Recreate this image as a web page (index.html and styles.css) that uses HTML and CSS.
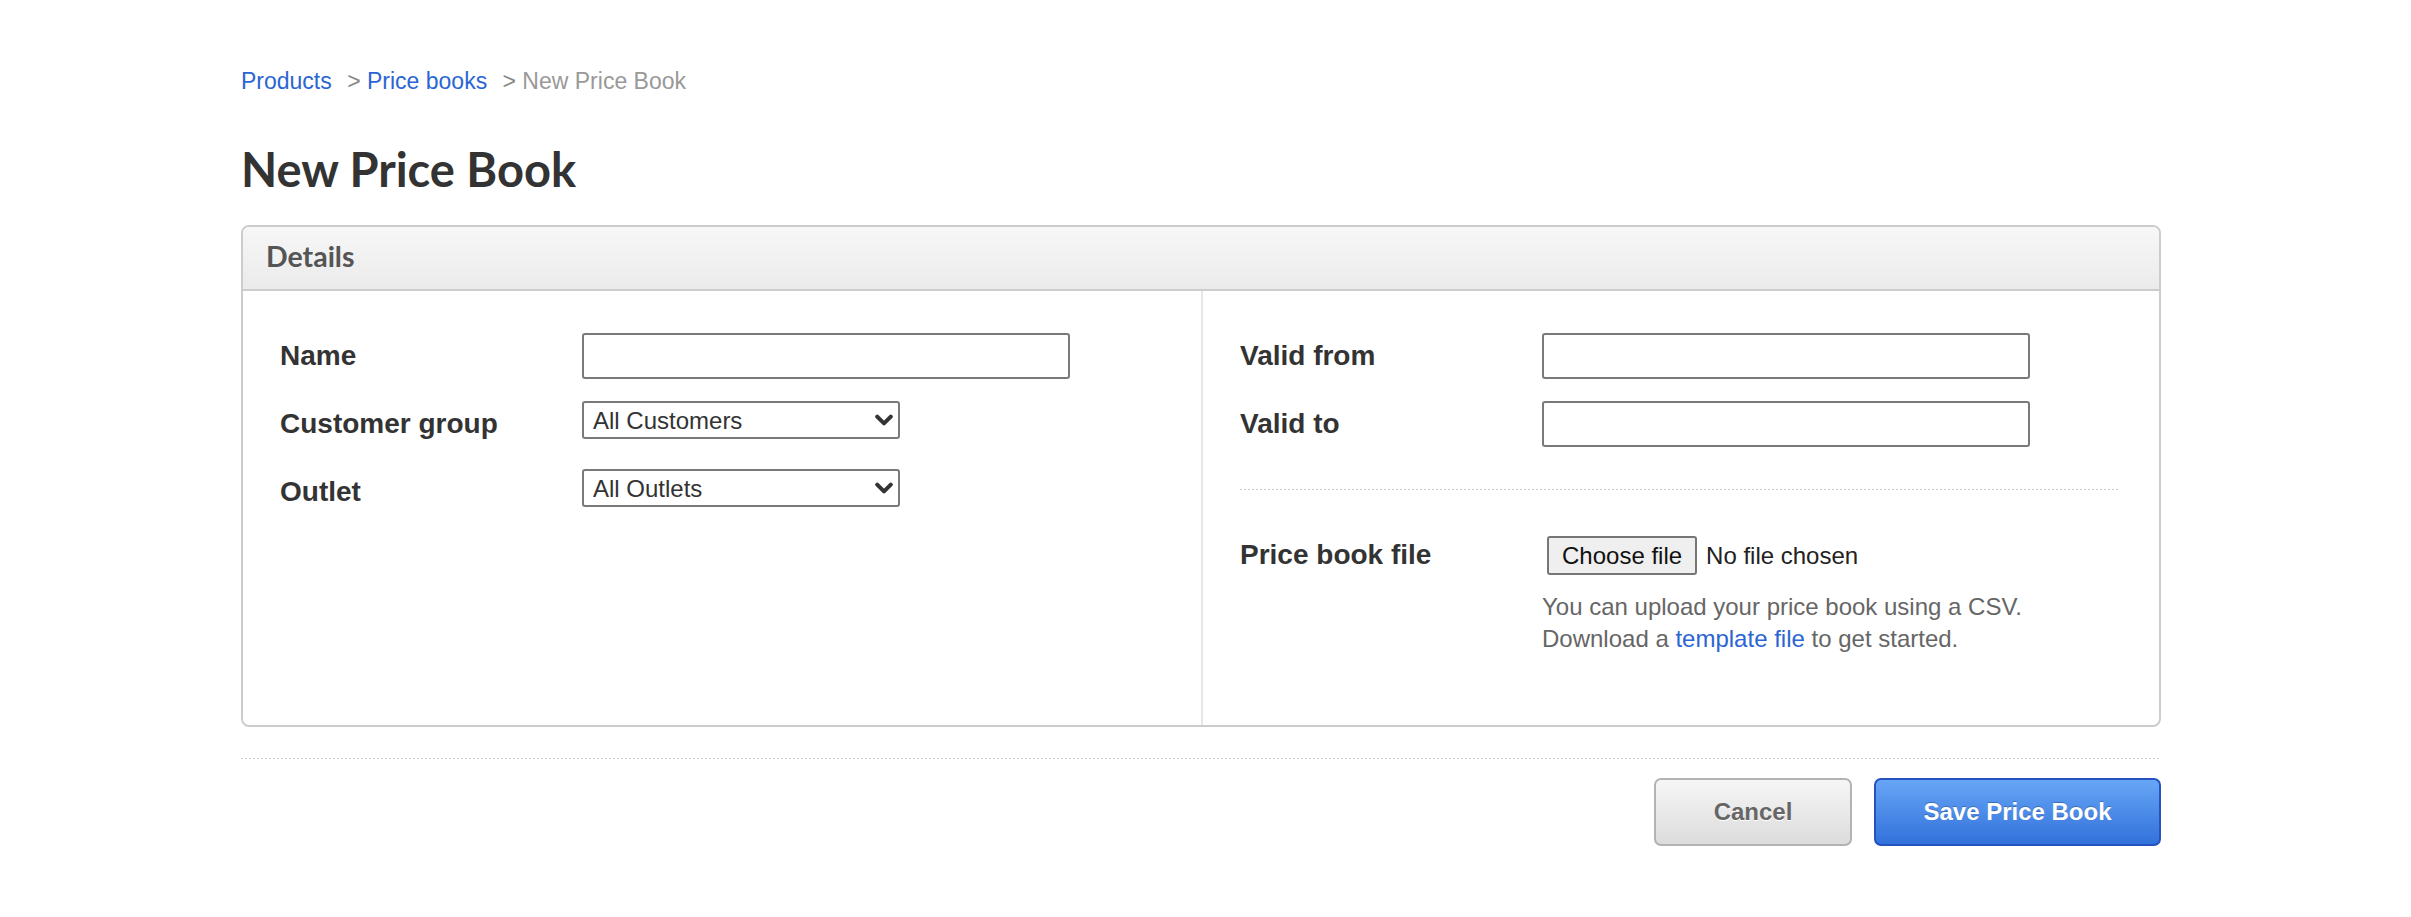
FILE: index.html
```html
<!DOCTYPE html>
<html lang="en">
<head>
    <meta charset="UTF-8">
    <meta name="viewport" content="width=device-width, initial-scale=1.0">
    <title>New Price Book</title>
    <link rel="stylesheet" href="styles.css">
</head>
<body>
    <div class="page">
        <div class="breadcrumb">
            <a href="#">Products</a> <span class="sep">&gt;</span> <a href="#">Price books</a> <span class="sep">&gt;</span> New Price Book
        </div>

        <h1 class="title">New Price Book</h1>

        <form class="panel">
            <div class="panel-header">Details</div>
            <div class="panel-body">
                <div class="col">
                    <div class="row">
                        <label for="name">Name</label>
                        <input type="text" id="name" class="text-input">
                    </div>
                    <div class="row">
                        <label for="customerGroup">Customer group</label>
                        <div class="select-wrap">
                            <select id="customerGroup">
                                <option>All Customers</option>
                            </select>
                            <svg class="chevron" width="18" height="12" viewBox="0 0 18 12">
                                <path d="M2.2 2.6 L9 9.4 L15.8 2.6" fill="none" stroke="#333" stroke-width="4" stroke-linecap="round" stroke-linejoin="round"/>
                            </svg>
                        </div>
                    </div>
                    <div class="row">
                        <label for="outlet">Outlet</label>
                        <div class="select-wrap">
                            <select id="outlet">
                                <option>All Outlets</option>
                            </select>
                            <svg class="chevron" width="18" height="12" viewBox="0 0 18 12">
                                <path d="M2.2 2.6 L9 9.4 L15.8 2.6" fill="none" stroke="#333" stroke-width="4" stroke-linecap="round" stroke-linejoin="round"/>
                            </svg>
                        </div>
                    </div>
                </div>

                <div class="col">
                    <div class="row">
                        <label for="validFrom">Valid from</label>
                        <input type="text" id="validFrom" class="text-input">
                    </div>
                    <div class="row">
                        <label for="validTo">Valid to</label>
                        <input type="text" id="validTo" class="text-input">
                    </div>
                    <div class="separator"></div>
                    <div class="row">
                        <label for="priceBookFile">Price book file</label>
                        <div class="file-field">
                            <div class="file-picker">
                                <label class="file-button" for="priceBookFile">Choose file</label>
                                <span class="file-name">No file chosen</span>
                                <input type="file" id="priceBookFile" class="file-input">
                            </div>
                            <p class="help">You can upload your price book using a CSV.<br>Download a <a href="#">template file</a> to get started.</p>
                        </div>
                    </div>
                </div>
            </div>
        </form>

        <div class="form-actions">
            <button type="button" class="btn btn-cancel">Cancel</button>
            <button type="button" class="btn btn-save">Save Price Book</button>
        </div>
    </div>
</body>
</html>
```

FILE: styles.css
```css
body {
    margin: 0;
    font-family: "Liberation Sans", Arial, sans-serif;
    color: #333;
    background-color: #fff;
}
.page {
    width: 1920px;
    padding: 66px 0 0 241px;
}
.breadcrumb {
    font-size: 23px;
    line-height: 30px;
    color: #999;
}
.breadcrumb a {
    color: #2b65d4;
    text-decoration: none;
}
.breadcrumb .sep {
    margin-left: 9px;
    color: #888;
}
.title {
    margin: 44px 0 27px;
    font-family: Lato, "Liberation Sans", sans-serif;
    font-weight: 700;
    font-size: 47px;
    line-height: 58px;
    color: #333;
}
.panel {
    margin: 0;
    border: 2px solid #ccc;
    border-radius: 8px;
    overflow: hidden;
}
.panel-header {
    padding: 0 23px 4px;
    background: linear-gradient(#f7f7f7, #ebebeb);
    border-bottom: 2px solid #ccc;
    font-family: Lato, "Liberation Sans", sans-serif;
    font-weight: 700;
    font-size: 28.5px;
    line-height: 58px;
    color: #555;
}
.panel-body {
    display: grid;
    grid-template-columns: 1fr 1fr;
}
.col {
    display: flex;
    flex-direction: column;
    gap: 22px;
    padding: 42px 40px 70px 37px;
}
.col + .col {
    border-left: 2px solid #e6e6e6;
}
.row {
    display: flex;
    align-items: flex-start;
}
.row > label {
    flex: none;
    width: 302px;
    font-weight: 700;
    font-size: 28px;
    line-height: 46px;
    color: #333;
}
.text-input {
    box-sizing: border-box;
    width: 488px;
    height: 46px;
    margin: 0;
    padding: 0 9px;
    border: 2px solid #7a7a7a;
    border-radius: 3px;
    font-family: inherit;
    font-size: 24px;
}
.select-wrap {
    position: relative;
    width: 318px;
    height: 38px;
}
.select-wrap select {
    appearance: none;
    box-sizing: border-box;
    width: 100%;
    height: 38px;
    margin: 0;
    padding: 0 40px 0 9px;
    border: 2px solid #7a7a7a;
    border-radius: 3px;
    background-color: #fff;
    font-family: inherit;
    font-size: 24px;
    color: #333;
}
.chevron {
    position: absolute;
    right: 7px;
    top: 13px;
    pointer-events: none;
}
.separator {
    height: 1px;
    margin: 20px 0;
    background-image: repeating-linear-gradient(to right, #c8c8c8 0 2px, transparent 2px 4px);
}
.file-field {
    padding-top: 4px;
}
.file-picker {
    display: flex;
    align-items: center;
    font-size: 24px;
    color: #222;
}
.file-button {
    margin-left: 5px;
    padding: 4px 13px;
    border: 2px solid #767676;
    border-radius: 3px;
    background-color: #efefef;
    line-height: 27px;
    color: #111;
    cursor: pointer;
}
.file-name {
    margin-left: 9px;
}
.file-input {
    display: none;
}
.help {
    margin: 16px 0 0;
    font-size: 24px;
    line-height: 32px;
    color: #666;
}
.help a {
    color: #2b65d4;
    text-decoration: none;
}
.form-actions {
    display: flex;
    justify-content: flex-end;
    gap: 22px;
    margin-top: 31px;
    padding-top: 20px;
    background-image: repeating-linear-gradient(to right, #c8c8c8 0 2px, transparent 2px 4px);
    background-size: 100% 1px;
    background-repeat: no-repeat;
}
.btn {
    height: 68px;
    border: 2px solid;
    border-radius: 7px;
    font-family: inherit;
    font-weight: 700;
    font-size: 24px;
    cursor: pointer;
}
.btn-cancel {
    width: 198px;
    border-color: #b3b3b3;
    background: linear-gradient(#f6f6f6, #dcdcdc);
    color: #666;
    text-shadow: 0 1px 0 #fff;
}
.btn-save {
    width: 287px;
    border-color: #2453c0;
    background: linear-gradient(#67a6f6, #3271da);
    color: #fff;
    text-shadow: 0 -1px 0 rgba(0, 0, 0, 0.25);
}
```
